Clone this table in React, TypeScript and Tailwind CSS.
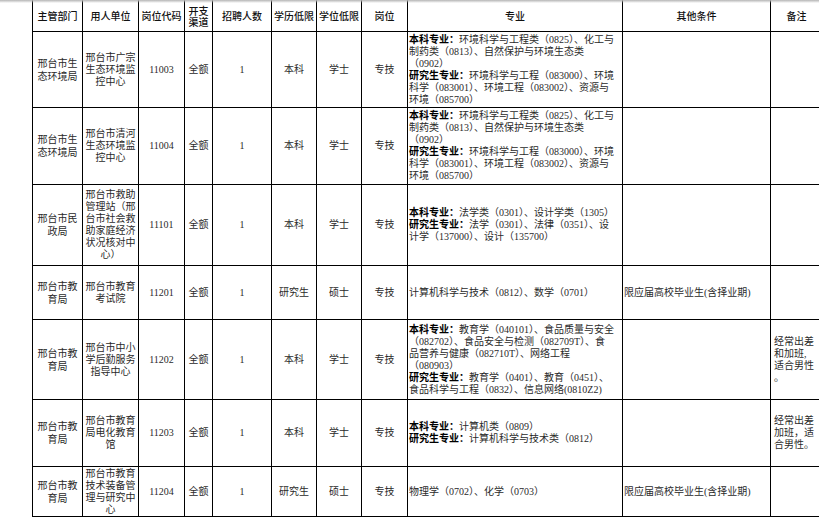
type Row = {
  dept: string[]
  unit: string[]
  code: string
  edu: string
  degree: string
  h: string
  major: string[]
  other: string
  note: string[]
}

const rows: Row[] = [
  {
    dept: ['邢台市生', '态环境局'],
    unit: ['邢台市广宗', '生态环境监', '控中心'],
    code: '11003',
    edu: '本科',
    degree: '学士',
    h: 'h-[76px]',
    major: [
      '本科专业：环境科学与工程类（0825）、化工与',
      '制药类（0813）、自然保护与环境生态类',
      '（0902）',
      '研究生专业：环境科学与工程（083000）、环境',
      '科学（083001）、环境工程（083002）、资源与',
      '环境（085700）',
    ],
    other: '',
    note: [],
  },
  {
    dept: ['邢台市生', '态环境局'],
    unit: ['邢台市清河', '生态环境监', '控中心'],
    code: '11004',
    edu: '本科',
    degree: '学士',
    h: 'h-[77px]',
    major: [
      '本科专业：环境科学与工程类（0825）、化工与',
      '制药类（0813）、自然保护与环境生态类',
      '（0902）',
      '研究生专业：环境科学与工程（083000）、环境',
      '科学（083001）、环境工程（083002）、资源与',
      '环境（085700）',
    ],
    other: '',
    note: [],
  },
  {
    dept: ['邢台市民', '政局'],
    unit: ['邢台市救助', '管理站（邢', '台市社会救', '助家庭经济', '状况核对中', '心）'],
    code: '11101',
    edu: '本科',
    degree: '学士',
    h: 'h-[81px]',
    major: [
      '本科专业：法学类（0301）、设计学类（1305）',
      '研究生专业：法学（0301）、法律（0351）、设',
      '计学（137000）、设计（135700）',
    ],
    other: '',
    note: [],
  },
  {
    dept: ['邢台市教', '育局'],
    unit: ['邢台市教育', '考试院'],
    code: '11201',
    edu: '研究生',
    degree: '硕士',
    h: 'h-[54px]',
    major: ['计算机科学与技术（0812）、数学（0701）'],
    other: '限应届高校毕业生(含择业期)',
    note: [],
  },
  {
    dept: ['邢台市教', '育局'],
    unit: ['邢台市中小', '学后勤服务', '指导中心'],
    code: '11202',
    edu: '本科',
    degree: '学士',
    h: 'h-[80px]',
    major: [
      '本科专业：教育学（040101）、食品质量与安全',
      '（082702）、食品安全与检测（082709T）、食',
      '品营养与健康（082710T）、网络工程',
      '（080903）',
      '研究生专业：教育学（0401）、教育（0451）、',
      '食品科学与工程（0832）、信息网络(0810Z2)',
    ],
    other: '',
    note: ['经常出差', '和加班,', '适合男性', '。'],
  },
  {
    dept: ['邢台市教', '育局'],
    unit: ['邢台市教育', '局电化教育', '馆'],
    code: '11203',
    edu: '本科',
    degree: '学士',
    h: 'h-[67px]',
    major: ['本科专业：计算机类（0809）', '研究生专业：计算机科学与技术类（0812）'],
    other: '',
    note: ['经常出差', '加班，适', '合男性。'],
  },
  {
    dept: ['邢台市教', '育局'],
    unit: ['邢台市教育', '技术装备管', '理与研究中', '心'],
    code: '11204',
    edu: '研究生',
    degree: '硕士',
    h: 'h-[50px]',
    major: ['物理学（0702）、化学（0703）'],
    other: '限应届高校毕业生(含择业期)',
    note: [],
  },
]

function MajorLine({ text }: { text: string }) {
  const m = text.match(/^(本科专业：|研究生专业：)(.*)$/)
  if (!m) return <div>{text}</div>
  return (
    <div>
      <span className="font-bold text-black">{m[1]}</span>
      {m[2]}
    </div>
  )
}

const td = 'border border-black align-middle'

export default function App() {
  return (
    <div className="relative w-[819px] h-[524px] overflow-hidden bg-white">
      <div className="pl-[32px] -mt-[1px]">
        <table className="table-fixed border-collapse w-[790px] text-[10px] leading-[12px] text-[#2a2a2a] font-['Liberation_Serif','Noto_Sans_CJK_SC',serif]">
          <colgroup>
            <col className="w-[50px]" />
            <col className="w-[56px]" />
            <col className="w-[46px]" />
            <col className="w-[28px]" />
            <col className="w-[59px]" />
            <col className="w-[45px]" />
            <col className="w-[45px]" />
            <col className="w-[46px]" />
            <col className="w-[215px]" />
            <col className="w-[148px]" />
            <col className="w-[52px]" />
          </colgroup>
          <thead>
            <tr className="h-[32px] text-[#111] font-medium font-['Noto_Sans_CJK_SC',sans-serif] text-center leading-[11px]">
              <th className={`${td} font-medium`}>主管部门</th>
              <th className={`${td} font-medium`}>用人单位</th>
              <th className={`${td} font-medium`}>岗位代码</th>
              <th className={`${td} font-medium`}>
                开支
                <br />
                渠道
              </th>
              <th className={`${td} font-medium`}>招聘人数</th>
              <th className={`${td} font-medium`}>学历低限</th>
              <th className={`${td} font-medium`}>学位低限</th>
              <th className={`${td} font-medium`}>岗位</th>
              <th className={`${td} font-medium`}>专业</th>
              <th className={`${td} font-medium`}>其他条件</th>
              <th className={`${td} font-medium`}>备注</th>
            </tr>
          </thead>
          <tbody>
            {rows.map((r) => (
              <tr key={r.code} className={r.h}>
                <td className={`${td} text-center leading-[13px]`}>
                  {r.dept.map((l) => (
                    <div key={l}>{l}</div>
                  ))}
                </td>
                <td className={`${td} text-center leading-[12px]`}>
                  {r.unit.map((l) => (
                    <div key={l}>{l}</div>
                  ))}
                </td>
                <td className={`${td} text-center`}>{r.code}</td>
                <td className={`${td} text-center`}>全额</td>
                <td className={`${td} text-center`}>1</td>
                <td className={`${td} text-center`}>{r.edu}</td>
                <td className={`${td} text-center`}>{r.degree}</td>
                <td className={`${td} text-center`}>专技</td>
                <td className={`${td} pl-[1px] whitespace-nowrap`}>
                  {r.major.map((l, i) => (
                    <MajorLine key={i} text={l} />
                  ))}
                </td>
                <td className={`${td} pl-[1px] whitespace-nowrap`}>{r.other}</td>
                <td className={`${td} pl-[3px] whitespace-nowrap`}>
                  {r.note.map((l, i) => (
                    <div key={i}>{l}</div>
                  ))}
                </td>
              </tr>
            ))}
          </tbody>
        </table>
      </div>
      <div className="absolute left-0 top-0 w-full h-[3px] bg-gradient-to-b from-[#b5b5b5] to-transparent" />
    </div>
  )
}
